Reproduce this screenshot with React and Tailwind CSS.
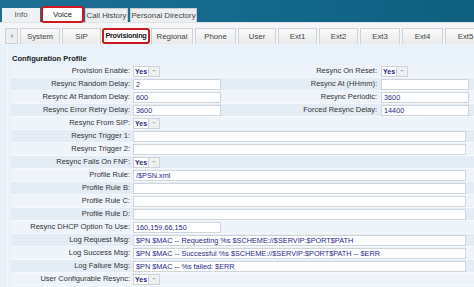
import React from 'react'

const topTabs = [
  { label: 'Info', w: 38, kind: 'plain' },
  { label: 'Voice', w: 41, kind: 'active' },
  { label: 'Call History', w: 43, kind: 'tab' },
  { label: 'Personal Directory', w: 67, kind: 'tab' },
]

const subTabs = [
  { label: 'System', w: 40 },
  { label: 'SIP', w: 39 },
  { label: 'Provisioning', w: 46, active: true },
  { label: 'Regional', w: 42 },
  { label: 'Phone', w: 41 },
  { label: 'User', w: 38 },
  { label: 'Ext1', w: 39 },
  { label: 'Ext2', w: 39 },
  { label: 'Ext3', w: 40 },
  { label: 'Ext4', w: 41 },
  { label: 'Ext5', w: 41 },
]

// type: select | input | long
const rows = [
  { label: 'Provision Enable:', type: 'select', right: { label: 'Resync On Reset:', type: 'select' } },
  { label: 'Resync Random Delay:', type: 'input', value: '2', right: { label: 'Resync At (HHmm):', type: 'input', value: '' } },
  { label: 'Resync At Random Delay:', type: 'input', value: '600', right: { label: 'Resync Periodic:', type: 'input', value: '3600' } },
  { label: 'Resync Error Retry Delay:', type: 'input', value: '3600', right: { label: 'Forced Resync Delay:', type: 'input', value: '14400' } },
  { label: 'Resync From SIP:', type: 'select' },
  { label: 'Resync Trigger 1:', type: 'long', value: '' },
  { label: 'Resync Trigger 2:', type: 'long', value: '' },
  { label: 'Resync Fails On FNF:', type: 'select' },
  { label: 'Profile Rule:', type: 'long', value: '/$PSN.xml' },
  { label: 'Profile Rule B:', type: 'long', value: '' },
  { label: 'Profile Rule C:', type: 'long', value: '' },
  { label: 'Profile Rule D:', type: 'long', value: '' },
  { label: 'Resync DHCP Option To Use:', type: 'input', value: '160,159,66,150' },
  { label: 'Log Request Msg:', type: 'long', value: '$PN $MAC -- Requesting %s $SCHEME://$SERVIP:$PORT$PATH' },
  { label: 'Log Success Msg:', type: 'long', value: '$PN $MAC -- Successful %s $SCHEME://$SERVIP:$PORT$PATH -- $ERR' },
  { label: 'Log Failure Msg:', type: 'long', value: '$PN $MAC -- %s failed: $ERR' },
  { label: 'User Configurable Resync:', type: 'select' },
]

const Field = ({ type, value }) => {
  if (type === 'select') {
    return (
      <div className="flex h-[11px] shrink-0">
        <div className="w-[16px] h-full bg-white border border-[#cdd3d9] text-[7px] font-bold leading-[9px] pl-[1px] text-[#24247a]">Yes</div>
        <div className="w-[11px] h-full bg-[#eef0f2] border border-l-0 border-[#cdd3d9] flex items-center justify-center">
          <div className="w-0 h-0 border-l-[2px] border-r-[2px] border-t-[2px] border-l-transparent border-r-transparent border-t-[#b9bec4]" />
        </div>
      </div>
    )
  }
  const w = type === 'long' ? 'w-[333px]' : 'w-[88px]'
  return (
    <div className={`${w} shrink-0 h-[11px] bg-white border border-[#cfd5db] text-[7.3px] leading-[9px] pl-[2px] text-[#28288a] whitespace-nowrap overflow-hidden`}>
      {value}
    </div>
  )
}

export default function App() {
  return (
    <div className="w-[474px] h-[287px] overflow-hidden bg-white font-['Liberation_Sans',Arial,sans-serif] text-[#333]">
      {/* top band */}
      <div className="h-[22px] pt-[8px] bg-gradient-to-r from-[#1d6f93] via-[#146a8c] to-[#0e5f80] flex gap-[2px]">
        {topTabs.map((t) => (
          <div
            key={t.label}
            style={{ width: t.w }}
            className={`relative shrink-0 h-[14px] flex items-center justify-center text-[7.8px] whitespace-nowrap ${
              t.kind === 'plain'
                ? 'bg-[#eef1f3] text-[#555] ml-[2px]'
                : t.kind === 'active'
                ? 'bg-white text-[#222]'
                : 'bg-[#eceef0] border border-b-0 border-[#c7ccd1] text-[#444]'
            }`}
          >
            {t.label}
            {t.kind === 'active' && (
              <div className="absolute -left-[1px] -right-[1px] -top-[2px] -bottom-[1px] border-[2px] border-[#d0161e] rounded-[3px]" />
            )}
          </div>
        ))}
      </div>

      {/* sub tabs */}
      <div className="h-[22px] bg-[#f4f5f6] border-t border-[#dfe3e6] flex items-end gap-[2px] pl-[5px]">
        <div className="w-[13px] h-[16px] shrink-0 bg-[#eceeef] border border-[#cdd1d5] flex items-center justify-center">
          <div className="w-0 h-0 border-t-[2px] border-b-[2px] border-r-[3px] border-t-transparent border-b-transparent border-r-[#aab0b6]" />
        </div>
        {subTabs.map((t) => (
          <div
            key={t.label}
            style={{ width: t.w }}
            className={`relative h-[16px] shrink-0 flex items-center justify-center whitespace-nowrap border border-b-0 border-[#cfd3d7] ${
              t.active
                ? 'bg-white text-[#111] font-bold text-[7.2px] tracking-[-0.2px]'
                : 'bg-gradient-to-b from-[#f9f9f9] to-[#e9eaeb] text-[#444] text-[7.8px]'
            }`}
          >
            {t.label}
            {t.active && (
              <div className="absolute -left-[2px] -right-[2px] -top-[1px] bottom-0 border-[2px] border-[#d0161e] rounded-[3px]" />
            )}
          </div>
        ))}
      </div>

      {/* content */}
      <div className="bg-[#e9f1f9] h-full pl-[7px]">
        <div className="border-l border-[#f7fafc] pl-[3px] pt-[9px]">
          <div className="text-[7.5px] font-bold text-[#222] h-[11px] leading-[11px] pl-[1px]">Configuration Profile</div>
          <div className="mt-[1px]">
            {rows.map((r, i) => (
              <div
                key={r.label}
                className={`h-[13px] flex items-center border-b border-[#f6f9fc] ${i % 2 === 0 ? 'bg-[#eef4fa]' : 'bg-[#e4edf6]'}`}
              >
                <div className="w-[122px] shrink-0 text-right pr-[3px] text-[7.5px] whitespace-nowrap">{r.label}</div>
                <Field type={r.type} value={r.value} />
                {r.right && (
                  <>
                    <div className="flex-1 text-right pr-[4px] text-[7.5px] whitespace-nowrap">{r.right.label}</div>
                    <div className="pr-[5px] w-[93px] shrink-0">
                      <Field type={r.right.type} value={r.right.value} />
                    </div>
                  </>
                )}
              </div>
            ))}
          </div>
        </div>
      </div>
    </div>
  )
}
